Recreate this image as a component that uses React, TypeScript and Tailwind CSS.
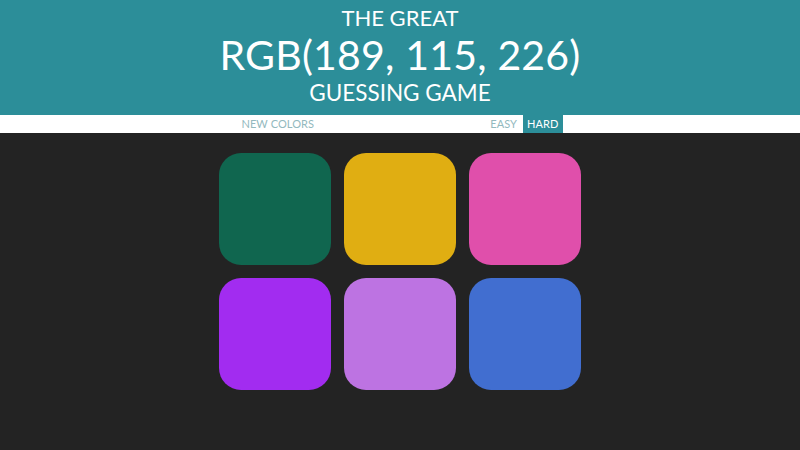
import React from 'react';

const squares = ['#10664f', '#e0ae12', '#e04fab', '#a22cf0', '#bd73e2', '#416ed0'];

const App: React.FC = () => {
    return (
        <div className="min-h-[450px] bg-[#232323] font-['Lato','Liberation_Sans',sans-serif] text-white">
            <h1 className="bg-[#2c8e99] h-[115px] flex flex-col items-center uppercase font-normal leading-[1.1]">
                <span className="text-[22px] pt-[6px]">The Great</span>
                <span className="text-[41px] leading-[50px] tracking-[0.2px]">RGB(189, 115, 226)</span>
                <span className="text-[22.5px] leading-[26px]">Guessing Game</span>
            </h1>
            <div className="bg-white h-[18px] flex justify-center items-stretch text-[11px] tracking-[0.1px]">
                <button className="px-[4px] uppercase text-[#93b9be]">New Colors</button>
                <span className="w-[168px]"></span>
                <button className="px-[4px] uppercase text-[#93b9be]">Easy</button>
                <button className="ml-[2px] px-[4px] uppercase bg-[#2c8e99] text-white">Hard</button>
            </div>
            <div className="mx-auto w-[362px] pt-[20px] grid grid-cols-3 gap-[13px]">
                {squares.map((c) => (
                    <div key={c} className="h-[112px] rounded-[22px]" style={{ backgroundColor: c }} />
                ))}
            </div>
        </div>
    );
};

export default App;
